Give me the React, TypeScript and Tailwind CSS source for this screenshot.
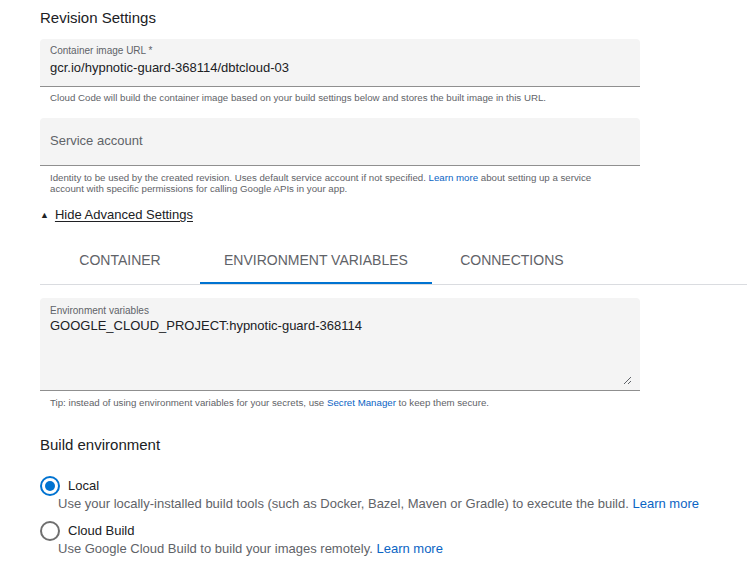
import React from "react";

// Build environment choices
const buildOptions = [
  {
    id: "local",
    label: "Local",
    description:
      "Use your locally-installed build tools (such as Docker, Bazel, Maven or Gradle) to execute the build.",
    checked: true,
  },
  {
    id: "cloud",
    label: "Cloud Build",
    description: "Use Google Cloud Build to build your images remotely.",
    checked: false,
  },
];

const tabs = [
  { name: "CONTAINER", active: false },
  { name: "ENVIRONMENT VARIABLES", active: true },
  { name: "CONNECTIONS", active: false },
];

const Link: React.FC<{ children: React.ReactNode }> = ({ children }) => (
  <a href="#" className="text-[#0b64c4]">
    {children}
  </a>
);

const App: React.FC = () => {
  return (
    <div
      className="min-h-screen bg-white pl-10 pt-2 text-[#202124]"
      style={{ fontFamily: '"Liberation Sans", Arial, sans-serif' }}
    >
      <h2 className="text-[15px] leading-5">Revision Settings</h2>

      {/* Container image URL */}
      <div className="mt-[11px] h-12 w-[600px] rounded-t-[4px] border-b border-[#8f8f8f] bg-[#f4f4f4] px-[10px] pt-[6px]">
        <div className="text-[10px] leading-3 text-[#5f6368]">Container image URL *</div>
        <div className="mt-[2px] text-[13px] leading-[18px]">gcr.io/hypnotic-guard-368114/dbtcloud-03</div>
      </div>
      <p className="w-[600px] px-[10px] pt-[5px] text-[9.7px] leading-3 text-[#5f6368]">
        Cloud Code will build the container image based on your build settings below and stores the
        built image in this URL.
      </p>

      {/* Service account */}
      <div className="mt-[14px] flex h-12 w-[600px] items-center rounded-t-[4px] border-b border-[#8f8f8f] bg-[#f4f4f4] px-[10px] pb-[2px]">
        <span className="text-[13px] leading-[18px] text-[#5f6368]">Service account</span>
      </div>
      <p className="w-[600px] px-[10px] pt-[6px] text-[9.7px] leading-[11px] text-[#5f6368]">
        Identity to be used by the created revision. Uses default service account if not specified.{" "}
        <Link>Learn more</Link> about setting up a service
        <br />
        account with specific permissions for calling Google APIs in your app.
      </p>

      {/* Advanced toggle */}
      <div className="mt-[13px] flex items-center text-[13px] leading-4">
        <span className="mr-[6px] text-[9px]">▲</span>
        <a href="#" className="underline underline-offset-2">
          Hide Advanced Settings
        </a>
      </div>

      {/* Tabs */}
      <div className="mt-[13px] flex border-b border-[#dadce0]">
        {tabs.map((tab) => (
          <div
            key={tab.name}
            className="relative flex h-12 min-w-[160px] items-center justify-center px-6 text-[14px] text-[#5f6368]"
          >
            {tab.name}
            {tab.active && <div className="absolute bottom-0 left-0 right-0 h-[2px] bg-[#0073d1]" />}
          </div>
        ))}
      </div>

      {/* Environment variables */}
      <div className="relative mt-[13px] h-[93px] w-[600px] rounded-t-[4px] border-b border-[#8f8f8f] bg-[#f4f4f4] px-[10px] pt-[7px]">
        <div className="text-[10px] leading-3 text-[#5f6368]">Environment variables</div>
        <div className="text-[13px] leading-[18px]">GOOGLE_CLOUD_PROJECT:hypnotic-guard-368114</div>
        <svg className="absolute bottom-[5px] right-[8px]" width="10" height="10" viewBox="0 0 10 10">
          <path d="M9 2 L2 9 M9 6 L6 9" stroke="#5f6368" strokeWidth="1" fill="none" />
        </svg>
      </div>
      <p className="w-[600px] px-[10px] pt-[6px] text-[9.7px] leading-3 text-[#5f6368]">
        Tip: instead of using environment variables for your secrets, use <Link>Secret Manager</Link> to
        keep them secure.
      </p>

      {/* Build environment */}
      <h3 className="mt-[26px] text-[15px] leading-5">Build environment</h3>
      <div className="mt-[21px] flex flex-col gap-[9px]">
        {buildOptions.map((opt) => (
          <div key={opt.id}>
            <div className="flex h-5 items-center gap-2">
              <span
                className={
                  opt.checked
                    ? "flex h-5 w-5 items-center justify-center rounded-full border-2 border-[#0073d1]"
                    : "flex h-5 w-5 items-center justify-center rounded-full border-2 border-[#6f6f6f]"
                }
              >
                {opt.checked && <span className="h-[10px] w-[10px] rounded-full bg-[#0073d1]" />}
              </span>
              <span className="text-[13px] leading-4">{opt.label}</span>
            </div>
            <p className="pl-[18px] text-[13px] leading-4 text-[#5f6368]">
              {opt.description} <Link>Learn more</Link>
            </p>
          </div>
        ))}
      </div>
    </div>
  );
};

export default App;
